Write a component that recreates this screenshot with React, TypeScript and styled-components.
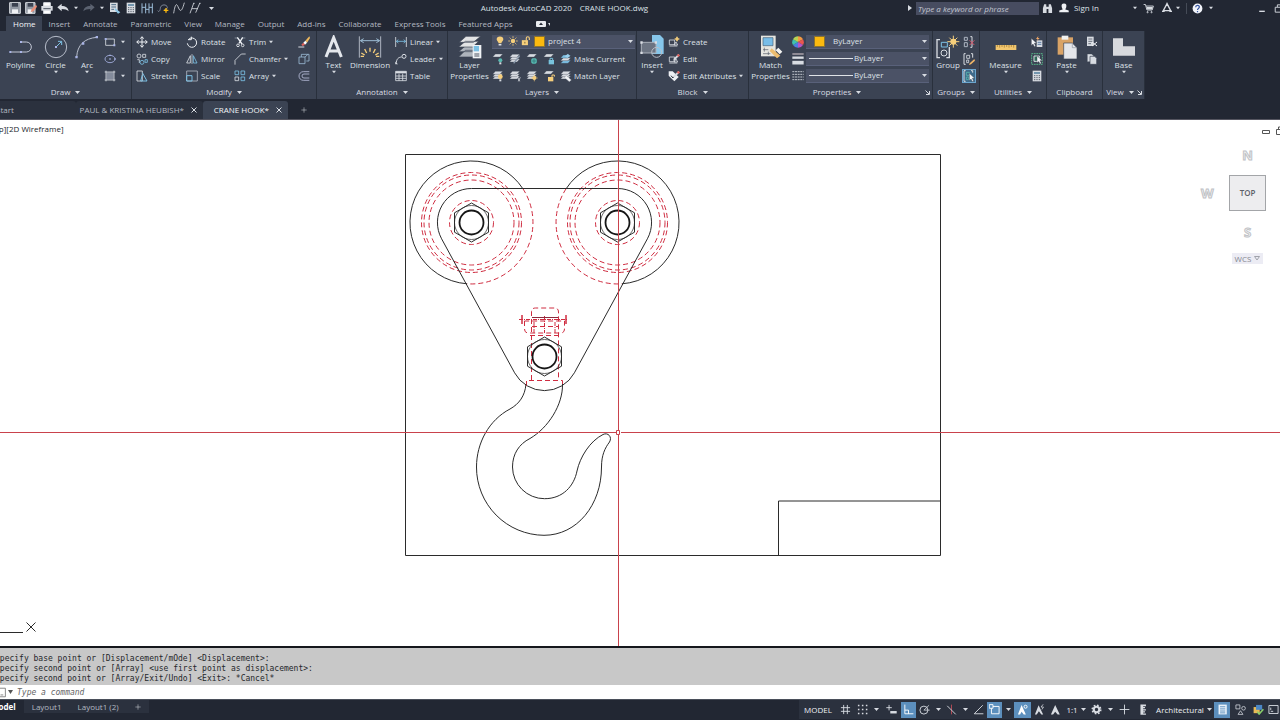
import React from "react";
import styled, { createGlobalStyle, css } from "styled-components";

const c = {
  dark: "#222733",
  panel: "#3b4353",
  line: "#29303c",
  field: "#4b5266",
  text: "#dde1e7",
  muted: "#b4b9c2",
  light: "#d8dce2",
  blue: "#7cc0e4",
  lilac: "#a9b4e6",
  yellow: "#f6cf7c",
  amber: "#fbb90f",
  red: "#cf2c40",
  teal: "#58b8b0",
};

const Global = createGlobalStyle`
  * { box-sizing: border-box; }
  body { margin: 0; background: ${c.dark}; }
  body, button, input, select {
    font-family: "Open Sans", "Noto Sans", sans-serif;
    font-size: 8px;
    line-height: 10px;
    color: ${c.text};
  }
  button { background: none; border: 0; padding: 0; cursor: pointer; }
  svg { display: block; flex: none; }
`;

const Shell = styled.div`
  min-height: 100vh;
  display: flex;
  flex-direction: column;
  overflow: hidden;
`;

/* ---------- icons ---------- */

const Icon = ({ size = 12, box = 36, children }: { size?: number; box?: number; children: React.ReactNode }) => (
  <svg width={size} height={size} viewBox={`0 0 ${box} ${box}`} fill="none" stroke={c.light} strokeWidth="3" aria-hidden="true">
    {children}
  </svg>
);

const Caret = ({ size = 5 }: { size?: number }) => (
  <svg width={size} height={size} viewBox="0 0 10 10" aria-hidden="true">
    <path d="M0 2h10L5 8z" fill={c.light} />
  </svg>
);

const sheet = (y: number, fill = c.light) => <path d={`M10 ${y}h22l-8 9H2z`} fill={fill} stroke={c.panel} strokeWidth="1" />;
const Sheets = () => (
  <>
    {sheet(18)}
    {sheet(11)}
    {sheet(4)}
  </>
);
const Cursor = ({ x = 0, y = 0 }) => (
  <path transform={`translate(${x} ${y})`} d="M0 0v22l5-5 4 8 4-2-4-8h7z" fill="#f2f4f7" stroke={c.dark} strokeWidth="1" />
);
const Pencil = () => (
  <>
    <path d="M31 3 18 16l-3 7 7-3L35 7z" fill={c.light} stroke="none" />
    <path d="m31 3 5 4-5 5-5-5z" fill="#e0605a" stroke="none" />
  </>
);
const BlockShape = () => <path d="M4 12h16v14H4zM4 30h24M24 18l5 9H18z" strokeWidth="2.5" />;

const icons: Record<string, React.ReactNode> = {
  save: (
    <>
      <path d="M2 2h32v32H2z" fill="#9097a2" />
      <path d="M9 3h18v11H9z" fill="#3a4150" stroke="none" />
      <path d="M9 22h18v12H9z" fill="#f0f2f5" stroke="none" />
    </>
  ),
  saveAs: (
    <>
      <path d="M2 2h28v32H2z" fill="#9097a2" />
      <path d="M8 3h16v11H8z" fill="#3a4150" stroke="none" />
      <path d="M8 22h14v12H8z" fill="#f0f2f5" stroke="none" />
      <path d="M33 8 20 22l-3 9 9-4L36 14z" fill="#e88d77" stroke="none" />
    </>
  ),
  print: (
    <>
      <path d="M8 2h20v10H8zM8 24h20v11H8z" fill="#fff" />
      <path d="M1 12h34v14H1z" fill={c.light} stroke="none" />
      <path d="M7 20h22" stroke="#4e5663" />
    </>
  ),
  undo: <path d="M1 16 14 5v7c12 0 19 4 21 16-5-5-11-7-21-7v7z" fill={c.light} stroke="none" />,
  redo: <path d="M35 16 22 5v7C10 12 3 16 1 28c5-5 11-7 21-7v7z" fill="#5b6270" stroke="none" />,
  propsheet: (
    <>
      <path d="M3 2h23v28H3z" fill={c.light} stroke="none" />
      <path d="M7 8h14M7 15h14M7 22h8" stroke="#4c6b86" />
      <path d="m18 18 16 13-7 4-10-12z" fill="#8fc6e6" stroke="none" />
    </>
  ),
  calc: (
    <>
      <path d="M5 2h26v32H5z" fill={c.light} stroke="none" />
      <path d="M9 9h18" stroke="#5d87a4" strokeWidth="5" />
      <path d="M9 17h4m3 0h4m3 0h4M9 23h4m3 0h4m3 0h4M9 29h4m3 0h4m3 0h4" stroke="#59616d" />
    </>
  ),
  dimset: <path d="M3 4v30M14 4v30M24 4v30M34 4v30M3 16h11M24 16h10M14 22h10" stroke="#9cbcd8" />,
  swirl: (
    <>
      <path d="M2 26c4 6 8-2 8-7 0-10 14-14 20-6 3 5-1 10-8 10" strokeWidth="2.5" stroke="#8e98a8" />
      <path d="M27 18v14M20 25h14" stroke={c.amber} strokeWidth="4" />
    </>
  ),
  spline: <path d="M2 34C6 8 10 2 15 14s10 22 19-12" strokeWidth="2.5" />,
  polyH: <path d="M3 34 14 4M20 32 32 4M9 20h18M12 4h5M30 4h5" strokeWidth="2.5" />,
  binoculars: <path d="M3 33V17l4-13h7v8h8V4h7l4 13v16H21V20h-6v13z" fill={c.light} stroke="none" />,
  user: <path d="M18 2c8 0 10 6 8 13-1 4-3 6-3 8l12 4v6H1v-6l12-4c0-2-2-4-3-8-2-7 0-13 8-13z" fill="#f0f2f5" stroke="none" />,
  cart: (
    <>
      <path d="M2 5h6l5 18h17l4-13H10" />
      <path d="M12 13h20l-3 8H14z" fill={c.light} stroke="none" />
      <circle cx="15" cy="30" r="2" />
      <circle cx="28" cy="30" r="2" />
    </>
  ),
  triA: <path d="M18 5 29 26H7zM3 28h8M25 28h8M18 2v6" strokeWidth="4" />,
  help: (
    <>
      <circle cx="18" cy="18" r="16" fill="#f2f4fa" stroke="none" />
      <path d="M12 14c0-8 12-8 12-1 0 5-6 5-6 10M18 26v4" stroke="#33529e" strokeWidth="4" />
    </>
  ),
  minimize: <path d="M8 30h20" strokeWidth="5" />,
  restore: <path d="M4 14h18v16H4zM11 13V6h18v16h-6" />,

  rect: (
    <>
      <path d="M5 9h26v19H5z" strokeWidth="2.5" />
      <path d="M2 6h6v6H2zM28 25h6v6h-6z" fill={c.lilac} stroke="none" />
    </>
  ),
  ellipse: (
    <>
      <ellipse cx="18" cy="18" rx="15" ry="11" stroke={c.lilac} strokeWidth="2.5" />
      <path d="M16 16h4v4h-4zM16 5h4v4h-4zM31 16h4v4h-4z" fill={c.lilac} stroke="none" />
    </>
  ),
  hatch: (
    <>
      <path d="M7 7h22v22H7z" fill="#838b9b" stroke="none" />
      <path d="M2 6h32M2 30h32M6 2v32M30 2v32" strokeWidth="2.5" />
    </>
  ),
  move: <path d="M18 3v30M3 18h30M13 8l5-6 5 6M13 28l5 6 5-6M8 13l-6 5 6 5M28 13l6 5-6 5" stroke="#eef1f5" />,
  copy: (
    <>
      <circle cx="9" cy="9" r="6" strokeWidth="2.5" />
      <path d="M20 4h9v9h-9zM4 20h6v10" strokeWidth="2.5" />
      <circle cx="18" cy="28" r="6" stroke={c.blue} strokeWidth="2.5" />
      <path d="M27 20h7v8h-7z" stroke={c.blue} strokeWidth="2.5" />
    </>
  ),
  stretch: (
    <>
      <path d="M3 3h16v30H3z" strokeWidth="2.5" />
      <path d="M19 8 33 33H14l5-18" stroke={c.blue} />
    </>
  ),
  rotate: <path d="M28 10A14 14 0 1 0 32 22M20 2v9h10" stroke="#eef1f5" transform="matrix(-1 0 0 1 36 0)" />,
  mirror: (
    <>
      <path d="M13 8v22H2z" strokeWidth="2.5" />
      <path d="M22 8v22h11z" stroke={c.blue} strokeWidth="2.5" />
      <path d="M18 3v30" strokeWidth="2" />
    </>
  ),
  scale: (
    <>
      <path d="M2 3h32v30H2z" strokeWidth="2.5" stroke="#aeb5c0" />
      <path d="M2 17h16v16H2z" stroke={c.blue} />
    </>
  ),
  trim: (
    <>
      <path d="M2 6h10M24 6h10" stroke="#7f8896" />
      <path d="m10 4 14 20M26 4 15 22" strokeWidth="4" stroke="#eef1f5" />
      <circle cx="12" cy="28" r="4" />
      <circle cx="26" cy="28" r="4" />
    </>
  ),
  chamfer: <path d="M3 35V22L22 3h13" strokeWidth="2.5" />,
  array: (
    <>
      <path d="M3 3h11v11H3zM21 3h11v11H21z" strokeWidth="2.5" stroke={c.blue} />
      <path d="M3 21h11v11H3z" strokeWidth="2.5" />
      <path d="M21 21h11v11H21z" strokeWidth="2.5" stroke={c.blue} />
    </>
  ),
  erase: (
    <>
      <path d="M34 1 22 14l5 6L36 6z" fill="#eeb95e" stroke="none" />
      <path d="m22 14-6 6 5 6 6-6z" fill="#fff" stroke="none" />
      <path d="m16 20-6 6 4 4 7-4z" fill="#e2655e" stroke="none" />
      <path d="M1 33h18" />
    </>
  ),
  explode: (
    <>
      <path d="M3 12h18v20H3z" stroke="#9ab9d4" strokeWidth="2.5" />
      <path d="M10 4h23v20h-8M10 4v8M21 12l9-8" stroke="#9ab9d4" strokeWidth="2.5" />
    </>
  ),
  offset: <path d="M34 5H16a13 13 0 0 0 0 26h18M34 12H18a6 6 0 0 0 0 12h16" strokeWidth="2.5" stroke="#b7bdda" />,

  linear: (
    <>
      <path d="M2 3v30M34 3v30" strokeWidth="2.5" />
      <path d="M4 16h28M10 11l-6 5 6 5M26 11l6 5-6 5" stroke={c.blue} strokeWidth="2.5" />
    </>
  ),
  leader: (
    <>
      <path d="M3 32c2-14 6-19 17-20" />
      <circle cx="27" cy="10" r="6" />
      <path d="M1 26v8h8z" fill={c.light} stroke="none" />
    </>
  ),
  table: (
    <>
      <path d="M2 4h32v28H2zM2 18h32M2 25h32M12 11v21M23 11v21" strokeWidth="2.5" />
      <path d="M2 7h32" strokeWidth="6" />
    </>
  ),
  bulb: (
    <>
      <path d="M18 2c8 0 12 5 12 10 0 6-6 8-7 14H13C12 20 6 18 6 12 6 7 10 2 18 2z" fill={c.yellow} stroke="none" />
      <path d="M13 29h10v5H13z" fill="#e9ecf0" stroke="none" />
    </>
  ),
  sun: (
    <>
      <circle cx="18" cy="18" r="8" fill={c.yellow} stroke="none" />
      <path d="M18 1v6M18 29v6M1 18h6M29 18h6M6 6l4 4M26 26l4 4M6 30l4-4M26 10l4-4" stroke={c.yellow} />
    </>
  ),
  unlock: (
    <>
      <path d="M19 16V8c0-7 11-7 11 0v6" stroke={c.yellow} strokeWidth="4" />
      <path d="M3 15h22v18H3z" fill={c.yellow} stroke="none" />
      <path d="M14 21v6" stroke="#5a4c2b" />
    </>
  ),
  layBulb: (
    <>
      {sheet(3)}
      <circle cx="25" cy="22" r="6" fill={c.teal} stroke="none" />
      <path d="M22 28h6v6h-6z" fill={c.light} stroke="none" />
    </>
  ),
  layIso: (
    <>
      <Sheets />
      <path d="M14 31 32 8" stroke="#8796a8" strokeWidth="4" />
    </>
  ),
  layFreeze: (
    <>
      {sheet(3)}
      <circle cx="24" cy="24" r="9" fill={c.teal} stroke="none" />
      <path d="M24 16v16M16 24h16" stroke="#2d6d6f" strokeWidth="2" />
    </>
  ),
  layLock: (
    <>
      {sheet(3)}
      <path d="M17 21h16v13H17z" fill="#78c3dd" stroke="none" />
      <path d="M21 21v-5h8v5" stroke="#78c3dd" />
    </>
  ),
  makeCurrent: (
    <>
      {sheet(22, c.blue)}
      {sheet(14)}
      {sheet(6, c.blue)}
      <path d="m14 10 10-8 6 8-8 4z" fill="#9cd0ec" stroke="none" />
    </>
  ),
  layOn: (
    <>
      <Sheets />
      <circle cx="25" cy="20" r="7" fill={c.yellow} stroke="none" />
      <path d="M22 28h6v6h-6z" fill={c.light} stroke="none" />
    </>
  ),
  layUniso: (
    <>
      <Sheets />
      <path d="m24 18 8 16M34 22l-6 12" strokeWidth="2.5" />
    </>
  ),
  layThaw: (
    <>
      <Sheets />
      <circle cx="25" cy="24" r="6" fill={c.yellow} stroke="none" />
      <path d="M25 14v20M15 24h20" stroke={c.yellow} strokeWidth="2" />
    </>
  ),
  layUnlock: (
    <>
      {sheet(3)}
      <path d="M15 21h16v13H15z" fill={c.yellow} stroke="none" />
      <path d="M27 21v-6h7v5" stroke={c.yellow} />
    </>
  ),
  matchLayer: (
    <>
      <Sheets />
      <path d="m18 16 16 14-6 5-14-12z" fill="#f2f4f6" stroke="#8b93a0" strokeWidth="1" />
    </>
  ),
  create: (
    <>
      <BlockShape />
      <path d="M27 2v14M20 9h14" stroke={c.yellow} strokeWidth="5" />
    </>
  ),
  edit: (
    <>
      <BlockShape />
      <Pencil />
    </>
  ),
  editAttr: (
    <>
      <path d="M2 4h12l18 17-13 13L2 17z" fill="#eef0f4" stroke="none" />
      <path d="m9 17 6 7 10-11" stroke={c.dark} />
      <Pencil />
    </>
  ),
  wheel: (
    <g stroke="none">
      <path d="M18 18V1a17 17 0 0 1 15 9z" fill="#f39a42" />
      <path d="m18 18 15-8a17 17 0 0 1 0 17z" fill="#e9574f" />
      <path d="m18 18 15 9a17 17 0 0 1-15 8z" fill="#b755c6" />
      <path d="M18 18v17a17 17 0 0 1-15-8z" fill="#4c7fe0" />
      <path d="M18 18 3 27a17 17 0 0 1 0-17z" fill="#3fc3ae" />
      <path d="M18 18 3 10a17 17 0 0 1 15-9z" fill="#b6d455" />
    </g>
  ),
  weights: (
    <>
      <path d="M1 3h34" stroke="#b9aeb6" strokeWidth="4" />
      <path d="M1 14h34" strokeWidth="7" />
      <path d="M1 29h34" strokeWidth="11" />
    </>
  ),
  linetypes: <path d="M1 5h34M1 13h34M1 21h34M1 29h34" strokeDasharray="6 2" strokeWidth="2.5" />,
  ungroup: (
    <>
      <path d="M4 4h9v9H4zM4 20h9v12H4z" stroke="#aeb6c2" />
      <path d="M22 2h5v32h-5" />
      <path d="m20 13 14 14M34 13 20 27" stroke="#d8566a" />
    </>
  ),
  groupEdit: (
    <>
      <path d="M8 2H3v32h5M24 2h5v12" />
      <path d="M11 7h9v9h-9zM11 21h6v8h-6z" strokeWidth="2.5" />
      <path d="m34 18-14 13-2 5 6-2L36 23z" fill="#efb567" stroke="none" />
    </>
  ),
  groupSel: (
    <>
      <path d="M8 2H3v32h5M24 2h5v6" />
      <path d="M10 7h9v9h-9zM10 21h7v8h-7z" stroke={c.teal} strokeWidth="2.5" />
      <Cursor x={19} y={10} />
    </>
  ),
  quickSelect: (
    <>
      <path d="M17 13h17v20H17z" fill={c.light} stroke="none" />
      <path d="M20 19h11M20 25h11" stroke="#5a7ca5" />
      <path d="m22 0-7 9h5l-3 7 9-10h-5z" fill="#f2a868" stroke="none" />
      <Cursor x={1} y={7} />
    </>
  ),
  selectAll: (
    <>
      <path d="M2 2h32v32H2z" stroke="#57b287" strokeDasharray="5 2" />
      <path d="M9 9h16v16H9z" fill="#2f6e58" stroke={c.light} />
      <Cursor x={18} y={8} />
    </>
  ),
  cutDoc: (
    <>
      <path d="M3 2h20v28H3z" fill={c.light} stroke="none" />
      <path d="M7 9h12M7 16h12M7 23h8" stroke="#555d6a" strokeWidth="2.5" />
      <path d="m18 18 15 12M33 18 18 30" stroke="#f0f2f5" />
    </>
  ),
  copyDoc: (
    <>
      <path d="M4 3h13l6 6v17H4z" fill={c.light} stroke={c.panel} strokeWidth="1" />
      <path d="M12 10h14l6 6v18H12z" fill={c.light} stroke={c.panel} strokeWidth="2" />
    </>
  ),

  grid: <path d="M12 3v30M24 3v30M3 12h30M3 24h30" />,
  dots: (
    <path d="M3 5h5M16 5h5M29 5h5M3 18h5M16 18h5M29 18h5M3 31h5M16 31h5M29 31h5" strokeWidth="5" />
  ),
  dynamic: (
    <>
      <path d="M10 3v18M1 12h18" />
      <path d="M14 27h21" strokeWidth="8" />
    </>
  ),
  ortho: <path d="M6 2v30h28M6 20h12v12" stroke="#fff" />,
  polar: (
    <>
      <circle cx="16" cy="20" r="13" />
      <path d="M16 20 33 4M16 20h19" strokeWidth="2.5" />
    </>
  ),
  iso: (
    <>
      <path d="M18 2v32" stroke="#bb4a55" />
      <path d="m4 6 28 28" />
    </>
  ),
  angle: <path d="M32 4 4 32h30" />,
  osnap: (
    <>
      <path d="M8 8h25v24H8z" stroke="#fff" />
      <path d="M1 2h12v12H1z" fill="#5c8fbd" stroke="#fff" />
    </>
  ),
  annoVis: (
    <>
      <path d="M15 3 3 34h7l5-9 7 9h7z" fill="#fff" stroke="none" />
      <circle cx="28" cy="9" r="5" stroke="#fff" />
    </>
  ),
  annoAuto: (
    <>
      <path d="M15 4 3 34h6l7-10 8 10h6z" fill={c.light} stroke="none" />
      <path d="m30 1-7 9h8l-5 8" strokeWidth="2.5" />
    </>
  ),
  annoScale: <path d="M17 3 3 34h7l7-9 8 9h7z" fill={c.light} stroke="none" />,
  gear: (
    <>
      <circle cx="18" cy="18" r="9" strokeWidth="7" />
      <circle cx="18" cy="18" r="14" strokeWidth="5" strokeDasharray="5.5 5.5" />
    </>
  ),
  plus: <path d="M18 2v32M2 18h32" />,
  ruler: <path d="M8 2h18v5H17v3h6v4h-6v3h9v4h-9v3h6v4h-6v3h9v4H8z" fill={c.light} stroke="none" />,
  quickProps: (
    <>
      <path d="M5 2h27v32H5z" fill="#eaf2fa" stroke="none" />
      <path d="M10 9h17M10 16h17M10 23h17M10 29h17" stroke="#5c8fbd" />
    </>
  ),
  isolate: (
    <>
      <path d="M3 3h13v13H3zM18 22l8 12H10z" strokeWidth="2.5" />
      <circle cx="28" cy="14" r="6" strokeWidth="2.5" />
    </>
  ),
  perf: (
    <>
      <path d="M2 10h20v20H2z" fill="#e9bb57" stroke="none" />
      <path d="M10 3h20v16H10z" fill="#4b87c5" stroke="none" />
      <path d="m14 25 6 8 14-16" stroke="#8bd06b" strokeWidth="5" />
    </>
  ),
  clean: <path d="M3 5h30v26H3zM9 24h8M9 12v8" />,
  prompt: <path d="M1 4h33v28H1zM8 13l7 6-7 6M18 26h9" stroke="#666" strokeWidth="2.5" />,
};

const big: Record<string, React.ReactNode> = {
  polyline: (
    <>
      <path d="M4 51h48a14 14 0 0 0 0-30H36" strokeWidth="3" stroke="#c3c8d6" />
      <path d="M1 48h6v6H1zM33 48h6v6h-6zM33 18h6v6h-6z" fill={c.lilac} stroke="none" />
    </>
  ),
  circle: (
    <>
      <circle cx="36" cy="36" r="32" strokeWidth="3" stroke="#b7bdca" />
      <path d="m36 36 16-16M42 19h11v11" stroke={c.blue} />
      <path d="M33 33h6v6h-6z" fill={c.lilac} stroke="none" />
    </>
  ),
  arc: (
    <>
      <path d="M5 66C7 30 28 10 66 7" strokeWidth="3" stroke="#b7bdca" />
      <path d="M1 63h7v7H1zM21 22h7v7h-7zM62 3h7v7h-7z" fill={c.lilac} stroke="none" />
    </>
  ),
  text: <path d="M12 66 35 8l23 58M20 48h30" strokeWidth="9" stroke="#e4e7ec" />,
  dimension: (
    <>
      <path d="M4 4v64M68 4v64" stroke="#aeb5c0" />
      <path d="M8 17h56M17 11 7 17l10 6M55 11l10 6-10 6" stroke="#9dbdd3" />
      <path d="M36 38v12M20 42l6 12M52 42l-6 12M10 54l10 6M62 54l-10 6M8 64h10M54 64h10" stroke={c.yellow} strokeWidth="4" />
    </>
  ),
  layerProps: (
    <>
      <path d="M22 46h40L44 66H2zM22 33h40L44 50H2z" fill="#aeb4bc" stroke={c.panel} strokeWidth="2" />
      <path d="M22 19h40L44 36H2zM24 4h44L46 22H4z" fill="#e3e4e5" stroke={c.panel} strokeWidth="2" />
      <path d="M44 30h26v40H44z" fill="#f0f3f6" stroke="none" />
      <path d="M47 33h16v16H47z" fill={c.blue} stroke="none" />
      <path d="M49 57h15M49 63h15" stroke="#4c5462" />
    </>
  ),
  insert: (
    <>
      <path d="M36 0h24l11 11v46H36z" fill="#86c6ea" stroke="none" />
      <path d="M4 22h44v32H4z" fill="#6c7482" stroke="#aab0ba" />
      <path d="M1 19h7v7H1zM44 19h7v7h-7zM1 50h7v7H1z" fill={c.light} stroke="none" />
      <circle cx="50" cy="52" r="15" stroke="#b8bec8" />
    </>
  ),
  matchProps: (
    <>
      <path d="M6 2h44v62H6z" fill="#e6e5df" stroke="none" />
      <path d="M12 8h30v24H12z" fill="#78bde8" stroke="#46607a" strokeWidth="2" />
      <path d="M12 44h16M16 38v12M12 56h22M28 50v10" stroke="#535a66" strokeWidth="2" />
      <path d="m38 40 26 22-10 8-22-22z" fill="#edbd6f" stroke="none" />
      <path d="m50 46 8-8 12 12-8 8z" fill="#f4f4f2" stroke="none" />
    </>
  ),
  group: (
    <>
      <path d="M12 14H3v54h9M40 36v32h-9" strokeWidth="4" />
      <path d="M16 22h18v14H16z" stroke={c.blue} />
      <circle cx="24" cy="54" r="9" />
      <circle cx="52" cy="20" r="9" fill={c.yellow} stroke="none" />
      <path d="M52 2v36M34 20h36M40 8l24 24M64 8 40 32" stroke={c.yellow} />
    </>
  ),
  measure: (
    <>
      <path d="M5 30h62v15H5z" fill="#f2c76f" stroke="none" />
      <path d="M10 30v6M17 30v8M24 30v6M31 30v8M38 30v6M45 30v8M52 30v6M59 30v8" stroke="#9a7430" strokeWidth="2" />
    </>
  ),
  paste: (
    <>
      <path d="M8 7h46v52H8z" fill="#d9a366" stroke="none" />
      <path d="M20 2h20v12H20z" fill="#f1f1ef" stroke="none" />
      <path d="M26 24h26l14 14v34H26z" fill="#e4e6ea" stroke={c.panel} strokeWidth="2" />
      <path d="M52 24v14h14" stroke="#8e949e" strokeWidth="2" />
    </>
  ),
  base: <path d="M3 10h30v24h36v28H3z" fill="#d7d9dd" stroke="none" />,
};

/* ---------- title bar ---------- */

const TitleBar = styled.header`
  display: flex;
  align-items: center;
  height: 16px;
  white-space: nowrap;
`;
const QuickAccess = styled.div`
  display: flex;
  align-items: center;
  gap: 4px;
  padding: 0 4px 0 9px;
`;
const MenuMark = styled.span`
  padding: 0 1px;
`;
const IconButton = styled.button<{ $w?: number; $on?: boolean }>`
  display: inline-flex;
  align-items: center;
  justify-content: center;
  width: ${(p) => (p.$w ? `${p.$w}px` : "auto")};
  flex: none;
  ${(p) =>
    p.$on &&
    css`
      background: #3f6b8c;
      outline: 1px solid #6ba6cf;
    `}
`;
const AppTitle = styled.h1`
  display: flex;
  gap: 8px;
  margin: 0 auto;
  font-size: 8px;
  font-weight: 400;
`;
const TitleRight = styled.div`
  display: flex;
  align-items: center;
  flex: none;
  width: 382px;
  margin-right: -10px;
`;
const Search = styled.input`
  flex: none;
  width: 123px;
  height: 13px;
  margin-left: 4px;
  padding: 0 2px;
  border: 0;
  background: #474c60;
  &::placeholder { color: #c3c7d0; font-style: italic; opacity: 1; }
`;
const Divider = styled.span`
  width: 1px;
  height: 11px;
  margin-left: 3px;
  background: #454b57;
`;
const Spacer = styled.span`
  flex: 1;
`;
const SignIn = styled.button`
  width: 66px;
  flex: none;
  display: flex;
  align-items: center;
  justify-content: space-between;
  padding-left: 3px;
`;

/* ---------- ribbon ---------- */

const TabRow = styled.nav`
  display: flex;
  height: 15px;
  padding-left: 6px;
`;
const RibbonTab = styled.button<{ $active?: boolean }>`
  display: flex;
  align-items: center;
  padding: 1px 6px 0 7px;
  color: ${(p) => (p.$active ? "#f3f5f8" : c.muted)};
  background: ${(p) => (p.$active ? c.panel : "none")};
`;
const Ribbon = styled.div`
  display: flex;
  height: 68px;
`;
const Panel = styled.section<{ $w: number }>`
  display: flex;
  flex-direction: column;
  flex: none;
  width: ${(p) => p.$w}px;
  background: ${c.panel};
  border-right: 1px solid ${c.line};
`;
const PanelBody = styled.div`
  display: flex;
  flex: 1;
  padding-top: 2px;
`;
const PanelTitle = styled.button`
  display: flex;
  align-items: center;
  height: 14px;
  color: ${c.light};
`;
const PanelName = styled.span`
  display: flex;
  align-items: center;
  gap: 5px;
  margin: 0 auto;
`;
const BigButton = styled.button<{ $w: number }>`
  display: flex;
  flex-direction: column;
  align-items: center;
  flex: none;
  width: ${(p) => p.$w}px;
  padding-top: 2px;
`;
const BigLabel = styled.span`
  padding-top: 1px;
`;
const Column = styled.div<{ $w?: number; $pad?: number; $end?: number }>`
  display: flex;
  flex-direction: column;
  flex: ${(p) => (p.$w ? "none" : "1")};
  width: ${(p) => (p.$w ? `${p.$w}px` : "auto")};
  padding-left: ${(p) => p.$pad ?? 0}px;
  padding-right: ${(p) => p.$end ?? 0}px;
`;
const Tool = styled.button<{ $gap?: number }>`
  display: flex;
  align-items: center;
  gap: ${(p) => p.$gap ?? 3}px;
  height: 17px;
  white-space: nowrap;
`;
const Row = styled.div<{ $gap?: number }>`
  display: flex;
  align-items: center;
  gap: ${(p) => p.$gap ?? 5}px;
  height: 17px;
`;
const Field = styled.label<{ $gap?: number; $pad?: number }>`
  display: flex;
  align-items: center;
  gap: ${(p) => p.$gap ?? 3}px;
  flex: 1;
  min-width: 0;
  height: 14px;
  padding: 0 2px 0 ${(p) => p.$pad ?? 3}px;
  background: ${c.field};
  border-bottom: 1px solid #59617a;
`;
const Select = styled.select`
  flex: 1;
  min-width: 0;
  height: 12px;
  padding: 0;
  border: 0;
  background: none;
  appearance: none;
`;
const Swatch = styled.span`
  width: 11px;
  height: 11px;
  background: ${c.amber};
  border: 1px solid #8a722f;
`;
const Rule = styled.span`
  width: 44px;
  height: 1px;
  background: #dfe2e7;
`;

const BigTool = ({ icon, w, lines, menu }: { icon: string; w: number; lines: string[]; menu?: boolean }) => (
  <BigButton $w={w}>
    <Icon size={24} box={72}>{big[icon]}</Icon>
    {lines.map((l) => (
      <BigLabel key={l}>{l}</BigLabel>
    ))}
    {menu && <Caret size={4} />}
  </BigButton>
);
const SmallTool = ({ icon, label, menu, gap }: { icon: string; label: string; menu?: boolean; gap?: number }) => (
  <Tool $gap={gap}>
    <Icon>{icons[icon]}</Icon>
    <span>{label}</span>
    {menu && <Caret size={4} />}
  </Tool>
);
const IconTool = ({ icon, name, menu, on }: { icon: string; name: string; menu?: boolean; on?: boolean }) => (
  <Row>
    <IconButton aria-label={name} $on={on}>
      <Icon>{icons[icon]}</Icon>
    </IconButton>
    {menu && <Caret size={4} />}
  </Row>
);

/* ---------- file tabs ---------- */

const FileTabs = styled.nav`
  display: flex;
  align-items: stretch;
  height: 21px;
  padding-top: 2px;
  border-bottom: 1px solid #555560;
`;
const FileTab = styled.button<{ $active?: boolean; $w: number }>`
  display: flex;
  align-items: center;
  justify-content: flex-end;
  gap: 7px;
  flex: none;
  width: ${(p) => p.$w}px;
  padding-right: 6px;
  white-space: nowrap;
  border-radius: 3px 3px 0 0;
  color: ${(p) => (p.$active ? "#f3f5f8" : c.muted)};
  background: ${(p) => (p.$active ? c.panel : "#2b313e")};
`;
const StartTab = styled(FileTab)`
  justify-content: flex-start;
  margin-left: -4px;
`;
const Cross = () => (
  <svg width="6" height="6" viewBox="0 0 12 12" aria-hidden="true">
    <path d="m1 1 10 10M11 1 1 11" stroke={c.light} strokeWidth="2" />
  </svg>
);

/* ---------- drawing area ---------- */

const Viewport = styled.main`
  position: relative;
  flex: 1;
  min-height: 300px;
  display: flex;
  background: #fff;
  border-bottom: 2px solid #15171c;
`;
const Sheet = styled.svg`
  width: 100%;
  height: auto;
  flex: 1;
`;
const ViewLabel = styled.div`
  position: absolute;
  top: 4px;
  left: -13px;
  color: #22252b;
`;
const WindowButtons = styled.div`
  position: absolute;
  top: 6px;
  right: -1px;
`;
const Compass = styled.div`
  position: absolute;
  top: 22px;
  right: 14px;
  display: grid;
  grid-template-columns: 28px 37px;
  grid-template-rows: 26px 50px 28px 25px;
  align-items: center;
  justify-items: center;
`;
const Heading = styled.button<{ $side?: boolean }>`
  grid-column: ${(p) => (p.$side ? 1 : 2)};
  grid-row: ${(p) => (p.$side ? 2 : "auto")};
  justify-self: ${(p) => (p.$side ? "start" : "center")};
  font-size: 13px;
  line-height: 14px;
  font-weight: 700;
  color: #f6f6f6;
  -webkit-text-stroke: 1px #c0c2c6;
`;
const Cube = styled.button`
  grid-column: 2;
  width: 37px;
  height: 36px;
  border: 1px solid #a3a5a8;
  background: #ededef;
  color: #5c6068;
  font-weight: 600;
`;
const Wcs = styled.button`
  grid-column: 2;
  display: flex;
  align-items: center;
  gap: 3px;
  height: 11px;
  padding: 0 3px;
  background: #ececf4;
  color: #83868f;
`;

const dash = { stroke: c.red, strokeDasharray: "5 3" };

const Hex = ({ x, y }: { x: number; y: number }) => (
  <g transform={`translate(${x} ${y})`}>
    <path d="M0-19.500 17-9.700V9.700L0 19.500-17 9.700V-9.700z" />
    <circle r="17" strokeWidth=".7" />
    <circle r="12" stroke="#161616" strokeWidth="1.800" />
  </g>
);
const Pulley = ({ x }: { x: number }) => (
  <g transform={`translate(${x} 222.500)`}>
    {[50, 47.5, 42.5, 22].map((r) => (
      <circle key={r} r={r} {...dash} />
    ))}
  </g>
);

const Drawing = () => (
  <Sheet viewBox="0 120 1280 526" fill="none" stroke="#2b2b2b" strokeWidth="1" role="img" aria-label="Crane hook drawing">
    <path d="M405.500 154.500h535v401h-535zM778.500 555.500v-54.500h162" />
    <Pulley x={471.5} />
    <Pulley x={617.5} />
    <path d="M523 188.900A61.500 61.500 0 0 1 467 283.800" {...dash} />
    <path d="M566 188.900A61.500 61.500 0 0 0 622 283.800" {...dash} />
    <path d="M523 188.900A61.500 61.500 0 1 0 467 283.800M566 188.900A61.500 61.500 0 1 1 622 283.800" />
    <path d="M471.500 188.500h146A34 34 0 0 1 647.400 238.800L574.400 372.800A34 34 0 0 1 514.600 372.800L441.600 238.800A34 34 0 0 1 471.500 188.500z" />
    <Hex x={471.5} y={222.5} />
    <Hex x={617.5} y={222.5} />
    <g {...dash}>
      <path d="M531.500 380V312q0-4 4-4h19q4 0 4 4v68" />
      <path d="M524.500 321v8q0 4 4 4h32q4 0 4-4v-8zM530 335.500h29M532 326.500h26" />
      <path d="M519 319.500h49M544.500 316v17M534 322v11M555 322v11" strokeDasharray="4 1 1 1" />
      <path d="M522 315v9M566 315v9" strokeDasharray="none" strokeWidth="1.500" />
      <path d="M532 317.500h26" strokeDasharray="none" stroke="#8c2a3c" />
      <path d="M526.500 386v-5.500h36v5.500" />
    </g>
    <Hex x={544.5} y={356.5} />
    <path d="M526 384C525 396 519 404 510 409 489 420 476.500 443 476.500 467A68 68 0 0 0 544 535.300C577 535.300 601.500 505 601.500 467 601.500 455 605 448 609.500 442 612.500 437 608 432 603 434.500 590 441 580 457 577 471 574 486 563 498.700 544.500 498.700A32 32 0 0 1 512.500 467C512.500 454 519 444 530 438.500 548 428 563 405 562.500 384" />
    <path d="M0 632.500h23M26.500 622.500l9 9M35.500 622.500l-9 9" />
    <g stroke="#c9424c">
      <path d="M618.500 120v310M618.500 435v211M0 432.500h616M621 432.500h659" />
      <path d="M616.500 430.500h3v4h-3z" />
    </g>
  </Sheet>
);

/* ---------- command line and status bar ---------- */

const mono = css`
  font-family: "DejaVu Sans Mono", "Liberation Mono", monospace;
  font-size: 8px;
  line-height: 10px;
`;
const History = styled.div`
  height: 37px;
  padding-top: 6px;
  margin-left: -5px;
  background: #c8c8c8;
  color: #25272b;
  white-space: pre;
  ${mono}
`;
const CommandRow = styled.label`
  display: flex;
  align-items: center;
  gap: 2px;
  height: 14px;
  margin-left: -5px;
  background: #fff;
`;
const CommandInput = styled.input`
  flex: 1;
  height: 12px;
  padding: 0 2px;
  border: 0;
  background: none;
  ${mono}
  color: #333;
  &::placeholder { color: #666; font-style: italic; opacity: 1; }
`;
const StatusBar = styled.footer`
  display: flex;
  justify-content: space-between;
  height: 21px;
  border-top: 1px solid #4a4f5a;
`;
const LayoutTabs = styled.div`
  display: flex;
  height: 13px;
  margin-left: -17px;
`;
const LayoutTab = styled.button<{ $active?: boolean }>`
  padding: 0 8px;
  font-weight: ${(p) => (p.$active ? 700 : 400)};
  color: ${(p) => (p.$active ? "#fff" : c.muted)};
  background: ${(p) => (p.$active ? c.dark : "#2b313e")};
`;
const Toggles = styled.div`
  display: flex;
  align-items: center;
  height: 19px;
  background: #2b313e;
`;
const Toggle = styled.button<{ $w: number; $on?: boolean }>`
  display: flex;
  align-items: center;
  justify-content: center;
  gap: 3px;
  flex: none;
  width: ${(p) => p.$w}px;
  height: 16px;
  color: #eef0f3;
  background: ${(p) => (p.$on ? "#5c8fbd" : "none")};
`;

type Item = { name: string; w: number; icon?: string; text?: string; on?: boolean; menu?: boolean };
const toggles: Item[] = [
  { name: "Model space", w: 38, text: "MODEL" },
  { name: "Grid", w: 17, icon: "grid" },
  { name: "Snap", w: 17, icon: "dots" },
  { name: "Snap settings", w: 10, menu: true },
  { name: "Dynamic input", w: 20, icon: "dynamic" },
  { name: "Ortho", w: 15, icon: "ortho", on: true },
  { name: "Polar tracking", w: 17, icon: "polar" },
  { name: "Polar settings", w: 10, menu: true },
  { name: "Isometric drafting", w: 17, icon: "iso" },
  { name: "Isometric settings", w: 10, menu: true },
  { name: "Snap tracking", w: 17, icon: "angle" },
  { name: "Object snap", w: 15, icon: "osnap", on: true },
  { name: "Object snap settings", w: 12, menu: true },
  { name: "Annotation visibility", w: 17, icon: "annoVis", on: true },
  { name: "Automatic scale", w: 16, icon: "annoAuto" },
  { name: "Annotation scale", w: 17, icon: "annoScale" },
  { name: "Scale", w: 24, text: "1:1", menu: true },
  { name: "Workspace", w: 16, icon: "gear" },
  { name: "Workspace settings", w: 13, menu: true },
  { name: "Annotation monitor", w: 15, icon: "plus" },
  { name: "Unit ruler", w: 22, icon: "ruler" },
  { name: "Units", w: 60, text: "Architectural", menu: true },
  { name: "Quick properties", w: 16, icon: "quickProps", on: true },
  { name: "Isolate objects", w: 20, icon: "isolate" },
  { name: "Hardware acceleration", w: 17, icon: "perf" },
  { name: "Clean screen", w: 13, icon: "clean" },
];

const quick: [string, string, boolean?][] = [
  ["save", "Save"],
  ["saveAs", "Save as"],
  ["print", "Print"],
  ["undo", "Undo", true],
  ["redo", "Redo", true],
  ["propsheet", "Match"],
  ["calc", "Calculator"],
  ["dimset", "Dimension set"],
  ["swirl", "New spline"],
  ["spline", "Spline"],
  ["polyH", "Polyline edit"],
];
const tabs = ["Home", "Insert", "Annotate", "Parametric", "View", "Manage", "Output", "Add-ins", "Collaborate", "Express Tools", "Featured Apps"];

const Caption = ({ children, menu = true, launch }: { children: string; menu?: boolean; launch?: boolean }) => (
  <PanelTitle>
    <PanelName>
      {children}
      {menu && <Caret />}
    </PanelName>
    {launch && (
      <svg width="7" height="5" viewBox="0 0 14 10" fill="none" stroke={c.light} strokeWidth="2" aria-hidden="true">
        <path d="m1 1 7 7M9 2v7H2" />
      </svg>
    )}
  </PanelTitle>
);

export default function App() {
  return (
    <Shell>
      <Global />
      <TitleBar>
        <QuickAccess>
          {quick.map(([icon, name, menu]) => (
            <React.Fragment key={icon}>
              <IconButton aria-label={name} $w={12}>
                <Icon>{icons[icon]}</Icon>
              </IconButton>
              {menu && <MenuMark><Caret size={4} /></MenuMark>}
            </React.Fragment>
          ))}
          <IconButton aria-label="Customize toolbar" $w={12}>
            <Caret />
          </IconButton>
        </QuickAccess>
        <AppTitle>
          <span>Autodesk AutoCAD 2020</span>
          <span>CRANE HOOK.dwg</span>
        </AppTitle>
        <TitleRight>
          <svg width="4" height="6" viewBox="0 0 4 6" aria-hidden="true">
            <path d="M0 0v6l4-3z" fill={c.light} />
          </svg>
          <Search aria-label="Search" placeholder="Type a keyword or phrase" />
          <IconButton aria-label="Find" $w={18}><Icon size={11}>{icons.binoculars}</Icon></IconButton>
          <IconButton aria-label="Account" $w={14}><Icon size={10}>{icons.user}</Icon></IconButton>
          <SignIn>Sign In<Caret size={4} /></SignIn>
          <IconButton aria-label="App store" $w={24}><Icon size={11}>{icons.cart}</Icon></IconButton>
          <IconButton aria-label="Autodesk apps" $w={12}><Icon size={12}>{icons.triA}</Icon></IconButton>
          <IconButton aria-label="App options" $w={10}><Caret size={4} /></IconButton>
          <Divider />
          <IconButton aria-label="Help" $w={22}><Icon size={11}>{icons.help}</Icon></IconButton>
          <IconButton aria-label="Help options" $w={4}><Caret size={4} /></IconButton>
          <Spacer />
          <IconButton aria-label="Minimize" $w={16}><Icon size={10}>{icons.minimize}</Icon></IconButton>
          <IconButton aria-label="Restore" $w={20}><Icon size={11}>{icons.restore}</Icon></IconButton>
        </TitleRight>
      </TitleBar>

      <TabRow>
        {tabs.map((t, i) => (
          <RibbonTab key={t} $active={i === 0}>{t}</RibbonTab>
        ))}
        <RibbonTab aria-label="Ribbon display">
          <svg width="24" height="6" viewBox="0 0 24 6" aria-hidden="true">
            <rect x="10" width="10" height="6" rx="1" fill="#e9ebef" />
            <path d="M13 4h4l-2-2.500z" fill={c.dark} />
            <path d="M22 2h4l-2 3z" fill={c.light} />
          </svg>
        </RibbonTab>
      </TabRow>

      <Ribbon>
        <Panel $w={132}>
          <PanelBody>
            <BigTool icon="polyline" w={41} lines={["Polyline"]} />
            <BigTool icon="circle" w={29} lines={["Circle"]} menu />
            <BigTool icon="arc" w={34} lines={["Arc"]} menu />
            <Column>
              <IconTool icon="rect" name="Rectangle" menu />
              <IconTool icon="ellipse" name="Ellipse" menu />
              <IconTool icon="hatch" name="Hatch" menu />
            </Column>
          </PanelBody>
          <Caption>Draw</Caption>
        </Panel>

        <Panel $w={185}>
          <PanelBody>
            <Column $w={54} $pad={4}>
              <SmallTool icon="move" label="Move" />
              <SmallTool icon="copy" label="Copy" />
              <SmallTool icon="stretch" label="Stretch" />
            </Column>
            <Column $w={48}>
              <SmallTool icon="rotate" label="Rotate" />
              <SmallTool icon="mirror" label="Mirror" />
              <SmallTool icon="scale" label="Scale" />
            </Column>
            <Column $w={64}>
              <SmallTool icon="trim" label="Trim" menu />
              <SmallTool icon="chamfer" label="Chamfer" menu />
              <SmallTool icon="array" label="Array" menu />
            </Column>
            <Column>
              <IconTool icon="erase" name="Erase" />
              <IconTool icon="explode" name="Explode" />
              <IconTool icon="offset" name="Offset" />
            </Column>
          </PanelBody>
          <Caption>Modify</Caption>
        </Panel>

        <Panel $w={131}>
          <PanelBody>
            <BigTool icon="text" w={33} lines={["Text"]} menu />
            <BigTool icon="dimension" w={40} lines={["Dimension"]} />
            <Column $pad={5}>
              <SmallTool icon="linear" label="Linear" menu />
              <SmallTool icon="leader" label="Leader" menu />
              <SmallTool icon="table" label="Table" />
            </Column>
          </PanelBody>
          <Caption>Annotation</Caption>
        </Panel>

        <Panel $w={189}>
          <PanelBody>
            <BigTool icon="layerProps" w={43} lines={["Layer", "Properties"]} />
            <Column $pad={1} $end={1}>
              <Row>
                <Field>
                  {["bulb", "sun", "unlock"].map((i) => (
                    <Icon key={i} size={10}>{icons[i]}</Icon>
                  ))}
                  <Swatch />
                  <Select aria-label="Layer"><option>project 4</option></Select>
                  <Caret />
                </Field>
              </Row>
              <Row>
                {["layBulb", "layIso", "layFreeze", "layLock"].map((i) => (
                  <IconButton key={i} aria-label={i}><Icon>{icons[i]}</Icon></IconButton>
                ))}
                <SmallTool icon="makeCurrent" label="Make Current" gap={2} />
              </Row>
              <Row>
                {["layOn", "layUniso", "layThaw", "layUnlock"].map((i) => (
                  <IconButton key={i} aria-label={i}><Icon>{icons[i]}</Icon></IconButton>
                ))}
                <SmallTool icon="matchLayer" label="Match Layer" gap={2} />
              </Row>
            </Column>
          </PanelBody>
          <Caption>Layers</Caption>
        </Panel>

        <Panel $w={112}>
          <PanelBody>
            <BigTool icon="insert" w={30} lines={["Insert"]} menu />
            <Column $pad={1}>
              <SmallTool icon="create" label="Create" />
              <SmallTool icon="edit" label="Edit" />
              <SmallTool icon="editAttr" label="Edit Attributes" menu />
            </Column>
          </PanelBody>
          <Caption>Block</Caption>
        </Panel>

        <Panel $w={184}>
          <PanelBody>
            <BigTool icon="matchProps" w={43} lines={["Match", "Properties"]} />
            <Column $end={3}>
              <Row $gap={2}>
                <Icon>{icons.wheel}</Icon>
                <Field $gap={8} $pad={8}><Swatch /><Select aria-label="Object colour"><option>ByLayer</option></Select><Caret /></Field>
              </Row>
              <Row $gap={2}>
                <Icon>{icons.weights}</Icon>
                <Field $gap={1}><Rule /><Select aria-label="Lineweight"><option>ByLayer</option></Select><Caret /></Field>
              </Row>
              <Row $gap={2}>
                <Icon>{icons.linetypes}</Icon>
                <Field $gap={1}><Rule /><Select aria-label="Linetype"><option>ByLayer</option></Select><Caret /></Field>
              </Row>
            </Column>
          </PanelBody>
          <Caption launch>Properties</Caption>
        </Panel>

        <Panel $w={47}>
          <PanelBody>
            <BigTool icon="group" w={30} lines={["Group"]} />
            <Column>
              <IconTool icon="ungroup" name="Ungroup" />
              <IconTool icon="groupEdit" name="Group edit" />
              <IconTool icon="groupSel" name="Group selection" on />
            </Column>
          </PanelBody>
          <Caption>Groups</Caption>
        </Panel>

        <Panel $w={67}>
          <PanelBody>
            <BigTool icon="measure" w={51} lines={["Measure"]} menu />
            <Column>
              <IconTool icon="quickSelect" name="Quick select" />
              <IconTool icon="selectAll" name="Select all" />
              <IconTool icon="calc" name="Quick calculator" />
            </Column>
          </PanelBody>
          <Caption>Utilities</Caption>
        </Panel>

        <Panel $w={56}>
          <PanelBody>
            <BigTool icon="paste" w={39} lines={["Paste"]} menu />
            <Column>
              <IconTool icon="cutDoc" name="Cut" />
              <IconTool icon="copyDoc" name="Copy clip" />
            </Column>
          </PanelBody>
          <Caption menu={false}>Clipboard</Caption>
        </Panel>

        <Panel $w={42}>
          <PanelBody>
            <BigTool icon="base" w={41} lines={["Base"]} menu />
          </PanelBody>
          <Caption launch>View</Caption>
        </Panel>
      </Ribbon>

      <FileTabs>
        <StartTab $w={80}>Start</StartTab>
        <FileTab $w={127}>PAUL &amp; KRISTINA HEUBISH*<Cross /></FileTab>
        <FileTab $w={85} $active>CRANE HOOK*<Cross /></FileTab>
        <IconButton aria-label="New drawing" $w={31}><Icon size={6}>{icons.plus}</Icon></IconButton>
      </FileTabs>

      <Viewport>
        <Drawing />
        <ViewLabel>[Top][2D Wireframe]</ViewLabel>
        <WindowButtons>
          <svg width="20" height="10" viewBox="0 0 20 10" fill="none" stroke="#555" aria-hidden="true">
            <path d="M1.500 4.500h7v3h-7zM15.500 3.500h6v5h-6zM17.500 3v-2h5" />
          </svg>
        </WindowButtons>
        <Compass>
          <Heading>N</Heading>
          <Heading $side>W</Heading>
          <Cube>TOP</Cube>
          <Heading>S</Heading>
          <Wcs>
            WCS
            <svg width="6" height="5" viewBox="0 0 6 5" fill="none" stroke="#a0a3ab" aria-hidden="true"><path d="M.500.500h5L3 4z" /></svg>
          </Wcs>
        </Compass>
      </Viewport>

      <History>{`Specify base point or [Displacement/mOde] <Displacement>:
Specify second point or [Array] <use first point as displacement>:
Specify second point or [Array/Exit/Undo] <Exit>: *Cancel*`}</History>
      <CommandRow>
        <Icon size={11}>{icons.prompt}</Icon>
        <svg width="5" height="4" viewBox="0 0 5 4" aria-hidden="true"><path d="M0 0h5L2.500 4z" fill="#555" /></svg>
        <CommandInput aria-label="Command" placeholder="Type a command" />
      </CommandRow>

      <StatusBar>
        <LayoutTabs>
          <LayoutTab $active>Model</LayoutTab>
          <LayoutTab>Layout1</LayoutTab>
          <LayoutTab>Layout1 (2)</LayoutTab>
          <LayoutTab aria-label="New layout"><Icon size={6}>{icons.plus}</Icon></LayoutTab>
        </LayoutTabs>
        <Toggles>
          {toggles.map((t) => (
            <Toggle key={t.name} $w={t.w} $on={t.on} aria-label={t.text ? undefined : t.name}>
              {t.icon && <Icon size={11}>{icons[t.icon]}</Icon>}
              {t.text}
              {t.menu && <Caret />}
            </Toggle>
          ))}
        </Toggles>
      </StatusBar>
    </Shell>
  );
}
